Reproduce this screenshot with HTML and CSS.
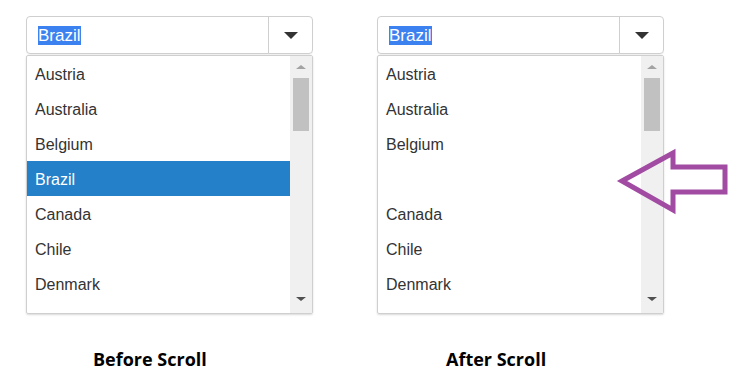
FILE: index.html
```html
<!DOCTYPE html>
<html lang="en">
<head>
  <meta charset="UTF-8">
  <title>Dropdown Scroll</title>
  <link rel="stylesheet" href="styles.css">
</head>
<body>
  <div class="page">
    <div class="demo">
      <div class="combo">
        <div class="combo-input"><span class="selected-text">Brazil</span></div>
        <div class="combo-button"><span class="caret"></span></div>
      </div>
      <div class="list">
        <div class="items">
          <div class="item">Austria</div>
          <div class="item">Australia</div>
          <div class="item">Belgium</div>
          <div class="item active">Brazil</div>
          <div class="item">Canada</div>
          <div class="item">Chile</div>
          <div class="item">Denmark</div>
        </div>
        <div class="scrollbar">
          <span class="arrow-up"></span>
          <div class="thumb"></div>
          <span class="arrow-down"></span>
        </div>
      </div>
      <div class="caption">Before Scroll</div>
    </div>

    <div class="demo">
      <div class="combo">
        <div class="combo-input"><span class="selected-text">Brazil</span></div>
        <div class="combo-button"><span class="caret"></span></div>
      </div>
      <div class="list">
        <div class="items">
          <div class="item">Austria</div>
          <div class="item">Australia</div>
          <div class="item">Belgium</div>
          <div class="item"></div>
          <div class="item">Canada</div>
          <div class="item">Chile</div>
          <div class="item">Denmark</div>
        </div>
        <div class="scrollbar">
          <span class="arrow-up"></span>
          <div class="thumb"></div>
          <span class="arrow-down"></span>
        </div>
      </div>
      <div class="caption caption-right">After Scroll</div>
    </div>

    <svg class="pointer" width="140" height="80" viewBox="0 0 140 80">
      <path d="M22 41 L73 13 L73 27 L125 27 L125 52 L73 52 L73 70 Z" fill="none" stroke="#a24ba3" stroke-width="5" stroke-linejoin="miter"/>
    </svg>
  </div>
</body>
</html>
```

FILE: styles.css
```css
body {
  margin: 0;
  background-color: #ffffff;
  font-family: "Liberation Sans", Arial, sans-serif;
}
.page {
  position: relative;
  display: flex;
  gap: 64px;
  padding: 16px 0 0 26px;
}
.demo {
  width: 287px;
}
.combo {
  display: flex;
  height: 38px;
  box-sizing: border-box;
  border: 1px solid #cfcfcf;
  border-radius: 4px;
  box-shadow: 0 1px 1px rgba(0, 0, 0, 0.06);
}
.combo-input {
  flex: 1;
  display: flex;
  align-items: center;
  padding-left: 11px;
}
.selected-text {
  background-color: #3b82f0;
  color: #ffffff;
  font-size: 17px;
  line-height: 19px;
}
.combo-button {
  width: 43px;
  border-left: 1px solid #cfcfcf;
  display: flex;
  align-items: center;
  justify-content: center;
}
.caret {
  width: 0;
  height: 0;
  border-left: 7px solid transparent;
  border-right: 7px solid transparent;
  border-top: 7px solid #333333;
}
.list {
  display: flex;
  margin-top: 1px;
  height: 259px;
  box-sizing: border-box;
  border: 1px solid #cfcfcf;
  border-radius: 2px;
  box-shadow: 0 1px 2px rgba(0, 0, 0, 0.15);
  overflow: hidden;
}
.items {
  flex: 1;
}
.item {
  height: 35px;
  line-height: 37px;
  padding-left: 8px;
  font-size: 16px;
  color: #333333;
}
.item.active {
  background-color: #2480c8;
  color: #ffffff;
}
.scrollbar {
  width: 22px;
  background-color: #f0f0f0;
  display: flex;
  flex-direction: column;
  align-items: center;
  padding-top: 9px;
  box-sizing: border-box;
}
.arrow-up {
  width: 0;
  height: 0;
  border-left: 5px solid transparent;
  border-right: 5px solid transparent;
  border-bottom: 4px solid #a3a3a3;
}
.thumb {
  width: 16px;
  height: 53px;
  margin-top: 9px;
  background-color: #c1c1c1;
}
.arrow-down {
  width: 0;
  height: 0;
  margin-top: 166px;
  border-left: 5px solid transparent;
  border-right: 5px solid transparent;
  border-top: 4px solid #505050;
}
.caption {
  margin-top: 35px;
  padding-left: 67px;
  font-family: "Open Sans", sans-serif;
  font-weight: bold;
  font-size: 18px;
  line-height: 20px;
  color: #000000;
}
.caption-right {
  padding-left: 69px;
}
.pointer {
  position: absolute;
  left: 600px;
  top: 140px;
}
```
